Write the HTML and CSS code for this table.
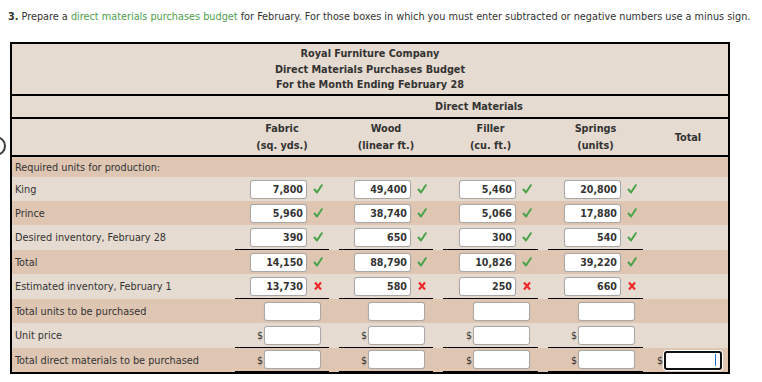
FILE: index.html
```html
<!DOCTYPE html>
<html>
<head>
<meta charset="utf-8">
<link rel="stylesheet" href="styles.css">
</head>
<body>
<span class="edge"></span>
<p class="q"><b>3.</b> Prepare a <span class="term">direct materials purchases budget</span> for February. For those boxes in which you must enter subtracted or negative numbers use a minus sign.</p>

<div class="sheet">
  <div class="title">
    <div>Royal Furniture Company</div>
    <div>Direct Materials Purchases Budget</div>
    <div>For the Month Ending February 28</div>
  </div>
  <div class="grid dm">
    <div></div>
    <div class="span">Direct Materials</div>
  </div>
  <div class="grid colhead">
    <div></div>
    <div>Fabric<br>(sq. yds.)</div>
    <div>Wood<br>(linear ft.)</div>
    <div>Filler<br>(cu. ft.)</div>
    <div>Springs<br>(units)</div>
    <div>Total</div>
  </div>

  <div class="grid row dark short">
    <div class="lbl">Required units for production:</div>
  </div>

  <div class="grid row light">
    <div class="lbl">King</div>
    <div class="cell"><input class="inp" value="7,800" readonly><svg class="ok" viewBox="0 0 10 10"><path d="M1.5 5.5 L4 8.5 L8.8 1.2"/></svg></div>
    <div class="cell"><input class="inp" value="49,400" readonly><svg class="ok" viewBox="0 0 10 10"><path d="M1.5 5.5 L4 8.5 L8.8 1.2"/></svg></div>
    <div class="cell"><input class="inp" value="5,460" readonly><svg class="ok" viewBox="0 0 10 10"><path d="M1.5 5.5 L4 8.5 L8.8 1.2"/></svg></div>
    <div class="cell"><input class="inp" value="20,800" readonly><svg class="ok" viewBox="0 0 10 10"><path d="M1.5 5.5 L4 8.5 L8.8 1.2"/></svg></div>
  </div>

  <div class="grid row dark">
    <div class="lbl">Prince</div>
    <div class="cell"><input class="inp" value="5,960" readonly><svg class="ok" viewBox="0 0 10 10"><path d="M1.5 5.5 L4 8.5 L8.8 1.2"/></svg></div>
    <div class="cell"><input class="inp" value="38,740" readonly><svg class="ok" viewBox="0 0 10 10"><path d="M1.5 5.5 L4 8.5 L8.8 1.2"/></svg></div>
    <div class="cell"><input class="inp" value="5,066" readonly><svg class="ok" viewBox="0 0 10 10"><path d="M1.5 5.5 L4 8.5 L8.8 1.2"/></svg></div>
    <div class="cell"><input class="inp" value="17,880" readonly><svg class="ok" viewBox="0 0 10 10"><path d="M1.5 5.5 L4 8.5 L8.8 1.2"/></svg></div>
  </div>

  <div class="grid row light ul">
    <div class="lbl">Desired inventory, February 28</div>
    <div class="cell"><input class="inp" value="390" readonly><svg class="ok" viewBox="0 0 10 10"><path d="M1.5 5.5 L4 8.5 L8.8 1.2"/></svg></div>
    <div class="cell"><input class="inp" value="650" readonly><svg class="ok" viewBox="0 0 10 10"><path d="M1.5 5.5 L4 8.5 L8.8 1.2"/></svg></div>
    <div class="cell"><input class="inp" value="300" readonly><svg class="ok" viewBox="0 0 10 10"><path d="M1.5 5.5 L4 8.5 L8.8 1.2"/></svg></div>
    <div class="cell"><input class="inp" value="540" readonly><svg class="ok" viewBox="0 0 10 10"><path d="M1.5 5.5 L4 8.5 L8.8 1.2"/></svg></div>
  </div>

  <div class="grid row dark">
    <div class="lbl">Total</div>
    <div class="cell"><input class="inp" value="14,150" readonly><svg class="ok" viewBox="0 0 10 10"><path d="M1.5 5.5 L4 8.5 L8.8 1.2"/></svg></div>
    <div class="cell"><input class="inp" value="88,790" readonly><svg class="ok" viewBox="0 0 10 10"><path d="M1.5 5.5 L4 8.5 L8.8 1.2"/></svg></div>
    <div class="cell"><input class="inp" value="10,826" readonly><svg class="ok" viewBox="0 0 10 10"><path d="M1.5 5.5 L4 8.5 L8.8 1.2"/></svg></div>
    <div class="cell"><input class="inp" value="39,220" readonly><svg class="ok" viewBox="0 0 10 10"><path d="M1.5 5.5 L4 8.5 L8.8 1.2"/></svg></div>
  </div>

  <div class="grid row light ul">
    <div class="lbl">Estimated inventory, February 1</div>
    <div class="cell"><input class="inp" value="13,730" readonly><svg class="bad" viewBox="0 0 10 10"><path d="M2 1.5 L8 8.5 M8 1.5 L2 8.5"/></svg></div>
    <div class="cell"><input class="inp" value="580" readonly><svg class="bad" viewBox="0 0 10 10"><path d="M2 1.5 L8 8.5 M8 1.5 L2 8.5"/></svg></div>
    <div class="cell"><input class="inp" value="250" readonly><svg class="bad" viewBox="0 0 10 10"><path d="M2 1.5 L8 8.5 M8 1.5 L2 8.5"/></svg></div>
    <div class="cell"><input class="inp" value="660" readonly><svg class="bad" viewBox="0 0 10 10"><path d="M2 1.5 L8 8.5 M8 1.5 L2 8.5"/></svg></div>
  </div>

  <div class="grid row dark">
    <div class="lbl">Total units to be purchased</div>
    <div class="cell plain"><input class="inp" value="" readonly></div>
    <div class="cell plain"><input class="inp" value="" readonly></div>
    <div class="cell plain"><input class="inp" value="" readonly></div>
    <div class="cell plain"><input class="inp" value="" readonly></div>
  </div>

  <div class="grid row light ul">
    <div class="lbl">Unit price</div>
    <div class="cell plain"><span class="cur">$</span><input class="inp" value="" readonly></div>
    <div class="cell plain"><span class="cur">$</span><input class="inp" value="" readonly></div>
    <div class="cell plain"><span class="cur">$</span><input class="inp" value="" readonly></div>
    <div class="cell plain"><span class="cur">$</span><input class="inp" value="" readonly></div>
  </div>

  <div class="grid row dark last">
    <div class="lbl">Total direct materials to be purchased</div>
    <div class="cell plain"><span class="cur">$</span><input class="inp" value="" readonly></div>
    <div class="cell plain"><span class="cur">$</span><input class="inp" value="" readonly></div>
    <div class="cell plain"><span class="cur">$</span><input class="inp" value="" readonly></div>
    <div class="cell plain"><span class="cur">$</span><input class="inp" value="" readonly></div>
    <div class="cell tot"><span class="cur">$</span><div class="inp focus"><span class="caret"></span></div></div>
  </div>
</div>
</body>
</html>
```

FILE: styles.css
```css
* { box-sizing: border-box; }
body {
  margin: 8px;
  font-family: "DejaVu Sans Condensed", "DejaVu Sans", sans-serif;
  font-size: 10.8px;
  color: #333;
  background: #fff;
}
.edge {
  position: fixed;
  left: -14px;
  top: 136px;
  width: 20px;
  height: 20px;
  border: 2px solid #3a3a3a;
  border-radius: 50%;
  z-index: 5;
}
.q { margin: 0; padding-top: 2px; line-height: 14px; white-space: nowrap; }
.q b { color: #333; }
.term { color: #4e9e4e; }

.sheet {
  margin: 18px 0 0 2px;
  width: 720px;
  border: 2px solid #000;
  background: #e6dbd0;
}
.title {
  height: 52px;
  padding-top: 2px;
  border-bottom: 2px solid #000;
  text-align: center;
  font-weight: bold;
  line-height: 15.5px;
}
.grid {
  display: grid;
  grid-template-columns: 218px 104px 104px 105px 105px 80px;
}
.dm {
  height: 23px;
  border-bottom: 2px solid #000;
  font-weight: bold;
  align-items: center;
}
.dm .span { grid-column: 2 / 7; text-align: center; }
.colhead {
  height: 38px;
  border-bottom: 2px solid #000;
  font-weight: bold;
  line-height: 17px;
  text-align: center;
  align-items: center;
}
.row { height: 24px; align-items: stretch; }
.row.short { height: 20px; }
.row.ul { height: 25px; }
.light { background: #e6dbd0; }
.dark { background: #dec6b3; }
.lbl { padding-left: 3px; display: flex; align-items: center; }

.cell {
  margin: 0 5px;
  display: flex;
  align-items: center;
  justify-content: flex-end;
  padding-right: 6px;
}
.row.ul .cell { border-bottom: 1px solid #000; }
.row.last .cell { border-bottom: 1px solid #000; }
.row.last .cell.tot { border-bottom: 0; margin: 0; padding-right: 6px; }
.cell.plain { padding-right: 8px; }

.inp {
  width: 57px;
  height: 19px;
  border: 1px solid #a8a8a8;
  border-radius: 3px;
  background: #fff;
  font: bold 10.6px "DejaVu Sans Condensed", "DejaVu Sans", sans-serif;
  color: #333;
  text-align: right;
  padding: 0 3px 0 2px;
  margin: 0;
  box-shadow: 0 0 1px rgba(0,0,0,0.15);
  outline: none;
}
.ok, .bad {
  width: 10px;
  height: 10px;
  margin-left: 6px;
  fill: none;
  stroke-linecap: round;
  stroke-linejoin: round;
}
.ok { stroke: #4aa34a; stroke-width: 2; }
.bad { stroke: #f02a2a; stroke-width: 2.2; stroke-linecap: butt; }
.cur { font-size: 10.6px; color: #333; margin-right: 1px; }

.inp.focus {
  width: 58px;
  height: 19px;
  border: 2px solid #111;
  box-shadow: 0 0 0 1px #fff;
  display: flex;
  align-items: center;
  justify-content: flex-end;
  padding-right: 4px;
}
.caret { width: 1px; height: 12px; background: #1a73e8; }
```
